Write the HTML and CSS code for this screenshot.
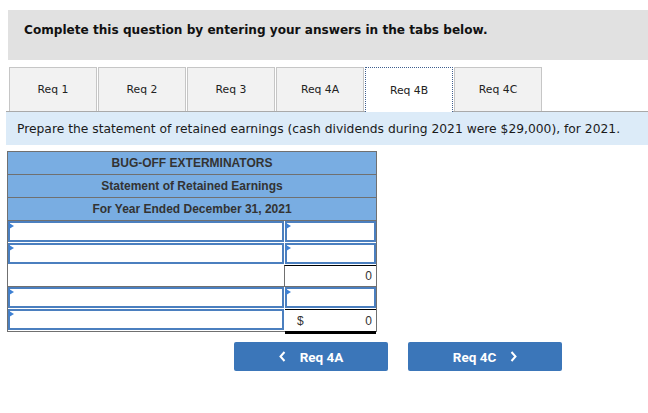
FILE: index.html
```html
<!DOCTYPE html>
<html>
<head>
<meta charset="utf-8">
<link rel="stylesheet" href="styles.css">
</head>
<body>
<div class="header">Complete this question by entering your answers in the tabs below.</div>
<div class="tabs">
  <div class="tab">Req 1</div>
  <div class="tab">Req 2</div>
  <div class="tab">Req 3</div>
  <div class="tab">Req 4A</div>
  <div class="tab active">Req 4B</div>
  <div class="tab">Req 4C</div>
</div>
<div class="prompt">Prepare the statement of retained earnings (cash dividends during 2021 were $29,000), for 2021.</div>
<div class="sheet">
  <div class="hrow">BUG-OFF EXTERMINATORS</div>
  <div class="hrow">Statement of Retained Earnings</div>
  <div class="hrow">For Year Ended December 31, 2021</div>
  <div class="drow">
    <div class="cl"><div class="inp"></div></div>
    <div class="cr"><div class="inp"></div></div>
  </div>
  <div class="drow">
    <div class="cl"><div class="inp"></div></div>
    <div class="cr"><div class="inp"></div></div>
  </div>
  <div class="drow plain">
    <div class="cl"></div>
    <div class="cr total"><span></span><span>0</span></div>
  </div>
  <div class="drow">
    <div class="cl"><div class="inp"></div></div>
    <div class="cr"><div class="inp"></div></div>
  </div>
  <div class="drow last">
    <div class="cl"><div class="inp"></div></div>
    <div class="cr total final"><span>$</span><span>0</span></div>
  </div>
</div>
<div class="nav">
  <div class="btn"><svg class="chev" width="7" height="11" viewBox="0 0 7 11"><polyline points="5.5,1 1.5,5.5 5.5,10" fill="none" stroke="#fff" stroke-width="2"/></svg><span>Req 4A</span></div>
  <div class="btn"><span>Req 4C</span><svg class="chev" width="7" height="11" viewBox="0 0 7 11"><polyline points="1.5,1 5.5,5.5 1.5,10" fill="none" stroke="#fff" stroke-width="2"/></svg></div>
</div>
</body>
</html>
```
FILE: styles.css
```css
body {
  margin: 0;
  font-family: "DejaVu Sans", Verdana, sans-serif;
  color: #1a1a1a;
  background: #fff;
}
.header {
  margin: 10px 0 0 8px;
  height: 50px;
  box-sizing: border-box;
  background: #e1e1e1;
  padding: 13px 0 0 16px;
  font-weight: bold;
  font-size: 12.1px;
  color: #111;
}
.tabs {
  display: flex;
  gap: 1px;
  margin: 7px 0 0 6px;
  padding-left: 3px;
  border-bottom: 1px solid #a9a9a9;
  height: 44px;
}
.tab {
  width: 86px;
  height: 43px;
  border: 1px solid #c6c6c6;
  border-bottom: none;
  background: #f2f2f2;
  display: flex;
  align-items: center;
  justify-content: center;
  font-size: 10.8px;
  color: #222;
}
.tab.active {
  background: #fff;
  border: 1px dotted #3f5f8f;
  border-bottom: none;
  height: 44px;
  position: relative;
  z-index: 1;
}
.prompt {
  margin-left: 6px;
  height: 33px;
  background: #dcebf8;
  padding-left: 11px;
  display: flex;
  align-items: center;
  font-size: 12.3px;
  color: #1a1a1a;
}
.sheet {
  margin: 6px 0 0 7px;
  width: 368px;
  border: 1px solid #707070;
  font-family: "Liberation Sans", Arial, sans-serif;
}
.hrow {
  height: 22px;
  background: #79ade2;
  border-bottom: 1px solid #707070;
  text-align: center;
  line-height: 22px;
  font-weight: bold;
  font-size: 12px;
  color: #333;
}
.drow {
  display: flex;
  height: 22px;
}
.cl {
  width: 276px;
  padding: 0 1px 1px 0;
}
.cr {
  flex: 1;
  padding: 0 0 1px 0;
}
.inp {
  height: 100%;
  box-sizing: border-box;
  border: 2px solid #4b7fbf;
  position: relative;
}
.inp::before {
  content: "";
  position: absolute;
  left: -1px;
  top: 0;
  border-left: 5px solid #3d80d3;
  border-top: 3px solid transparent;
  border-bottom: 3px solid transparent;
}
.plain .cl {
  border-bottom: 1px solid #707070;
  padding: 0;
}
.plain .cr {
  border-left: 1px solid #707070;
  border-top: 1px solid #000;
  border-bottom: 1px solid #707070;
  padding: 0;
}
.total {
  display: flex;
  justify-content: space-between;
  align-items: center;
  font-size: 12px;
  color: #333;
  padding: 0 4px 0 12px !important;
  box-sizing: border-box;
}
.final {
  border-top: 1px solid #000;
  border-bottom: 3px solid #000;
  margin-bottom: -3px;
}
.nav {
  display: flex;
  gap: 20px;
  margin: 10px 0 0 234px;
}
.btn {
  width: 154px;
  height: 29px;
  background: #3b76b9;
  border-radius: 2px;
  display: flex;
  align-items: center;
  justify-content: center;
  gap: 14px;
  color: #fff;
  font-family: Roboto, "Liberation Sans", sans-serif;
  font-weight: bold;
  font-size: 13.5px;
}
```
